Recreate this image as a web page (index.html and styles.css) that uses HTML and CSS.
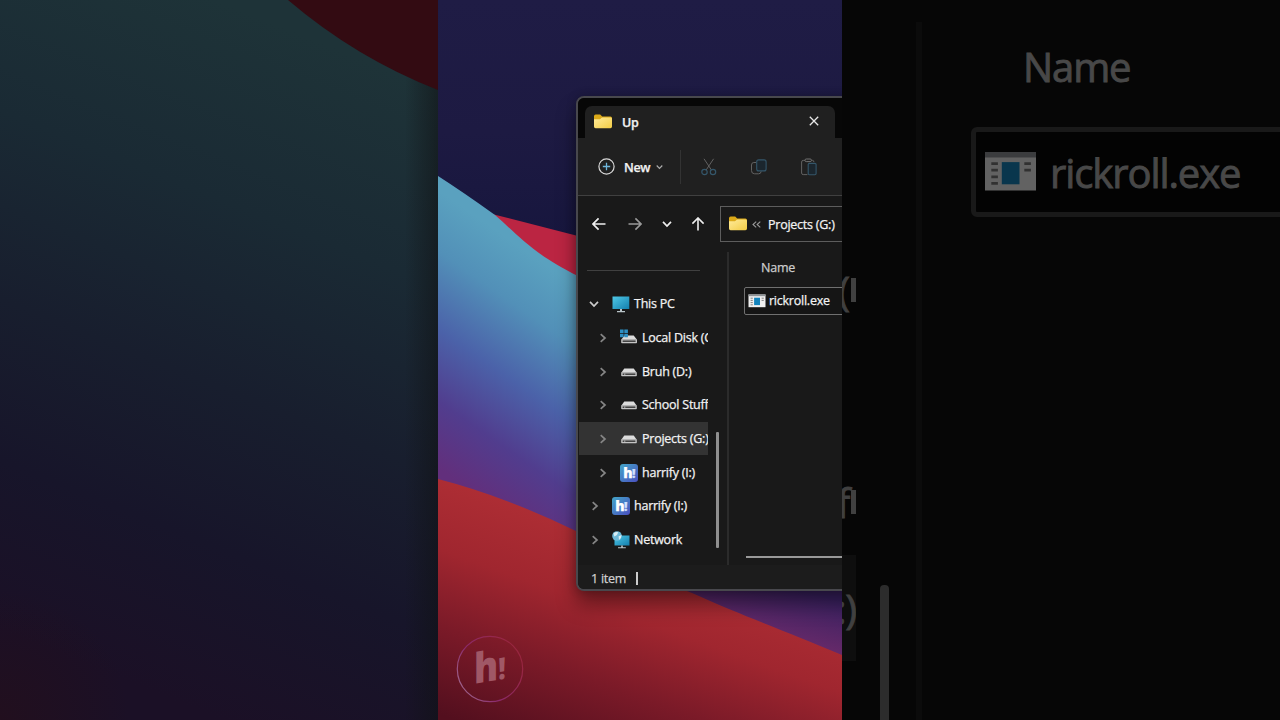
FILE: index.html
```
<!DOCTYPE html>
<html lang="en">
<head>
    <meta charset="UTF-8">
    <meta name="viewport" content="width=device-width, initial-scale=1.0">
    <title>rickroll.exe</title>
    <link rel="stylesheet" href="styles.css">
</head>
<body>
    <!-- shared icons -->
    <svg class="defs" width="0" height="0">
        <defs>
            <linearGradient id="folderFill" x1="0" y1="0" x2="1" y2="1">
                <stop offset="0" stop-color="#ffeb9a"/>
                <stop offset="1" stop-color="#f2cc45"/>
            </linearGradient>
            <linearGradient id="screenFill" x1="0" y1="0" x2="1" y2="1">
                <stop offset="0" stop-color="#4fc8e6"/>
                <stop offset="1" stop-color="#137fae"/>
            </linearGradient>
        </defs>
        <symbol id="folder" viewBox="0 0 18 15">
            <path d="M0 2.2Q0 .6 1.6 .6H6.2L8.2 2.6H16.4Q18 2.6 18 4.2V8H0Z" fill="#dba918"/>
            <path d="M0 5.2H6L8 3.4H16.6Q18 3.4 18 4.8V12.6Q18 14.2 16.4 14.2H1.6Q0 14.2 0 12.6Z" fill="url(#folderFill)"/>
        </symbol>
        <symbol id="right" viewBox="0 0 8 10">
            <path d="M1.7 1.2L6 5L1.7 8.8" fill="none" stroke="currentColor" stroke-width="1.7"/>
        </symbol>
        <symbol id="down" viewBox="0 0 10 8">
            <path d="M1 1.9L5 6L9 1.9" fill="none" stroke="currentColor" stroke-width="1.7"/>
        </symbol>
        <symbol id="drive" viewBox="0 0 18 18">
            <path d="M4.3 5.6H13.7L16.6 9.6H1.4Z" fill="#dcdcdc"/>
            <path d="M1.2 9.2H16.8V12.4Q16.8 13.2 16 13.2H2Q1.2 13.2 1.2 12.4Z" fill="#c4c4c4"/>
            <path d="M2.6 10.4H15.4V12H2.6Z" fill="#444"/>
            <path d="M4 10.8H5.4V11.6H4Z" fill="#ddd"/>
        </symbol>
        <symbol id="exe" viewBox="0 0 18 14">
            <path d="M.5 .5H17.5V13.2H.5Z" fill="#f0f0f0"/>
            <path d="M.5 .3H17.5V2.2H.5Z" fill="#8f9396"/>
            <path d="M6.1 3.7H12V11.1H6.1Z" fill="#1384bd"/>
            <path d="M2.6 4.2H4.8M2.6 6.4H4.8M2.6 8.6H4.8M2.6 10.8H4.8M13.6 4.2H15.8M13.6 6.4H15.8" stroke="#777" stroke-width=".9"/>
        </symbol>
    </svg>

    <div class="video">
        <!-- zoomed wallpaper -->
        <div class="side left">
            <svg viewBox="0 0 438 720" preserveAspectRatio="none">
                <path d="M288 0Q356 58 438 90V0Z" fill="#330b12"/>
            </svg>
        </div>

        <div class="screen">
            <svg class="wallpaper" viewBox="0 0 404 720">
                <defs>
                    <linearGradient id="sky" x1="0" y1="0" x2="0" y2="240" gradientUnits="userSpaceOnUse">
                        <stop offset="0" stop-color="#1f1c45"/>
                        <stop offset=".55" stop-color="#1d1a42"/>
                        <stop offset="1" stop-color="#17163e"/>
                    </linearGradient>
                    <linearGradient id="blue" x1="0" y1="190" x2="-130" y2="378" gradientUnits="userSpaceOnUse">
                        <stop offset="0" stop-color="#5aa1bf"/>
                        <stop offset=".22" stop-color="#5290b8"/>
                        <stop offset=".5" stop-color="#4b62a9"/>
                        <stop offset=".76" stop-color="#513d8e"/>
                        <stop offset="1" stop-color="#622f7c"/>
                    </linearGradient>
                    <linearGradient id="red" x1="140" y1="510" x2="60" y2="735" gradientUnits="userSpaceOnUse">
                        <stop offset="0" stop-color="#b02f35"/>
                        <stop offset=".35" stop-color="#a0262f"/>
                        <stop offset=".65" stop-color="#7b1a28"/>
                        <stop offset="1" stop-color="#530f1e"/>
                    </linearGradient>
                    <linearGradient id="purple" x1="360" y1="590" x2="345" y2="650" gradientUnits="userSpaceOnUse">
                        <stop offset="0" stop-color="#3a2161"/>
                        <stop offset="1" stop-color="#6e2b6b"/>
                    </linearGradient>
                </defs>
                <path d="M0 0H404V720H0Z" fill="url(#sky)"/>
                <path d="M50 213L140 236V290L60 260Z" fill="#bb2542"/>
                <path d="M0 176Q25 192 57 215C80 235 95 254 140 276V600H0Z" fill="url(#blue)"/>
                <path d="M230 570H404V670H230Z" fill="url(#purple)"/>
                <path d="M0 479Q66 496 138 531C190 556 220 580 254 593C310 618 350 632 404 655V720H0Z" fill="url(#red)"/>
            </svg>

            <div class="explorer">
                <div class="titlebar">
                    <div class="tab">
                        <svg class="folder"><use href="#folder"/></svg>
                        <span>Up</span>
                        <svg class="close" viewBox="0 0 10 10"><path d="M.8 .8L9.2 9.2M9.2 .8L.8 9.2" stroke="#e8e8e8" stroke-width="1.3"/></svg>
                    </div>
                </div>

                <div class="toolbar">
                    <div class="new-btn">
                        <svg class="plus" viewBox="0 0 17 17" fill="none">
                            <circle cx="8.5" cy="8.5" r="7.6" stroke="#d8d8d8" stroke-width="1.2"/>
                            <path d="M8.5 4.8V12.2M4.8 8.5H12.2" stroke="#6fb6dc" stroke-width="1.3"/>
                        </svg>
                        <span>New</span>
                        <svg class="caret"><use href="#down"/></svg>
                    </div>
                    <svg class="tool" viewBox="0 0 18 18" fill="none">
                        <path d="M4 .8L11.6 12.2M13.6 .8L6 12.2" stroke="#626262"/>
                        <circle cx="4.5" cy="14" r="2.7" stroke="#34566a" stroke-width="1.2"/>
                        <circle cx="13" cy="14" r="2.7" stroke="#34566a" stroke-width="1.2"/>
                    </svg>
                    <svg class="tool" viewBox="0 0 18 18" fill="none">
                        <path d="M6 4.5H3.8Q1.5 4.5 1.5 7V12.6Q1.5 15.8 4.6 15.8H8.6Q11 15.8 11.2 13.4" stroke="#626262"/>
                        <rect x="6.7" y="1.9" width="9.4" height="11" rx="2" fill="#1b262e" stroke="#34566a" stroke-width="1.1"/>
                    </svg>
                    <svg class="tool" viewBox="0 0 18 18" fill="none">
                        <path d="M5 2.4H3.2Q1.6 2.4 1.6 4V15Q1.6 16.6 3.2 16.6H7.4M11.5 2.4H12.6Q13.9 2.4 13.9 4" stroke="#626262"/>
                        <rect x="5" y="1" width="6.4" height="2.6" rx="1.2" stroke="#727272"/>
                        <rect x="8.2" y="5.4" width="7.9" height="11.3" rx="1.2" fill="#1b262e" stroke="#34566a" stroke-width="1.1"/>
                    </svg>
                </div>

                <div class="navbar">
                    <svg class="arrow" viewBox="0 0 14 14"><path d="M13.5 7H1.2M6.6 1.4L1 7L6.6 12.6" fill="none" stroke="#eee" stroke-width="1.7"/></svg>
                    <svg class="arrow dim" viewBox="0 0 14 14"><path d="M.5 7H12.8M7.4 1.4L13 7L7.4 12.6" fill="none" stroke="#999" stroke-width="1.6"/></svg>
                    <svg class="recent"><use href="#down"/></svg>
                    <svg class="arrow" viewBox="0 0 14 14"><path d="M7 13.5V1.2M1.4 6.6L7 1L12.6 6.6" fill="none" stroke="#eee" stroke-width="1.6"/></svg>
                    <div class="address">
                        <svg class="folder"><use href="#folder"/></svg>
                        <svg class="back" viewBox="0 0 9 7"><path d="M4.2 .6L1 3.5L4.2 6.4M8.3 .6L5.1 3.5L8.3 6.4" fill="none" stroke="#999" stroke-width="1.1"/></svg>
                        <span>Projects (G:)</span>
                    </div>
                </div>

                <div class="main">
                    <div class="sidebar">
                        <div class="line"></div>
                        <ul class="tree">
                            <li class="open">
                                <svg class="chev-down"><use href="#down"/></svg>
                                <svg class="icon" viewBox="0 0 18 18">
                                    <path d="M.5 1.5H17.3V14H.5Z" fill="url(#screenFill)"/>
                                    <path d="M8 14H10V16H13V17.2H5V16H8Z" fill="#b9c4c8"/>
                                </svg>
                                <span>This PC</span>
                            </li>
                            <li class="child">
                                <svg class="chev"><use href="#right"/></svg>
                                <svg class="icon" viewBox="0 0 18 18">
                                    <path d="M4.5 6.6H13.7L16.8 10.6H1.4Z" fill="#dcdcdc"/>
                                    <path d="M1.2 10.2H17V13.4Q17 14.2 16.2 14.2H2Q1.2 14.2 1.2 13.4Z" fill="#c4c4c4"/>
                                    <path d="M2.6 11.4H15.6V13H2.6Z" fill="#444"/>
                                    <path d="M0 .6H3.6V4.1H0ZM4.3 .6H7.9V4.1H4.3ZM0 4.8H3.6V8.3H0ZM4.3 4.8H7.9V8.3H4.3Z" fill="#2d8fc4"/>
                                </svg>
                                <span>Local Disk (C:)</span>
                            </li>
                            <li class="child">
                                <svg class="chev"><use href="#right"/></svg>
                                <svg class="icon"><use href="#drive"/></svg>
                                <span>Bruh (D:)</span>
                            </li>
                            <li class="child">
                                <svg class="chev"><use href="#right"/></svg>
                                <svg class="icon"><use href="#drive"/></svg>
                                <span>School Stuff</span>
                            </li>
                            <li class="child selected">
                                <svg class="chev"><use href="#right"/></svg>
                                <svg class="icon"><use href="#drive"/></svg>
                                <span>Projects (G:)</span>
                            </li>
                            <li class="child">
                                <svg class="chev"><use href="#right"/></svg>
                                <b class="logo">h<i>!</i></b>
                                <span>harrify (I:)</span>
                            </li>
                            <li>
                                <svg class="chev"><use href="#right"/></svg>
                                <b class="logo">h<i>!</i></b>
                                <span>harrify (I:)</span>
                            </li>
                            <li>
                                <svg class="chev"><use href="#right"/></svg>
                                <svg class="icon" viewBox="0 0 18 18">
                                    <path d="M2.5 4.5H17.5V14.5H2.5Z" fill="url(#screenFill)"/>
                                    <path d="M9.2 14.5H10.8V16.2H13.8V17.3H6V16.2H9.2Z" fill="#b9c4c8"/>
                                    <circle cx="5" cy="5" r="4.8" fill="#6db9d8"/>
                                    <path d="M1.5 2.4Q4 .4 6.2 1.2L5 4L2.4 5.4ZM6.6 5.2L9.6 4Q9.6 7.4 7 9Z" fill="#d9eef5"/>
                                </svg>
                                <span>Network</span>
                            </li>
                        </ul>
                    </div>
                    <div class="track"><div class="thumb"></div></div>
                    <div class="files">
                        <div class="col-name">Name</div>
                        <div class="file">
                            <svg><use href="#exe"/></svg>
                            <span>rickroll.exe</span>
                        </div>
                        <div class="hscroll"></div>
                    </div>
                </div>

                <div class="status"><span>1 item</span></div>
            </div>

            <!-- channel watermark -->
            <div class="watermark">
                <svg viewBox="0 0 68 68">
                    <defs>
                        <linearGradient id="ring" x1="0" y1="1" x2="1" y2=".4">
                            <stop offset="0" stop-color="#a57a98"/>
                            <stop offset=".45" stop-color="#8b2a6c"/>
                            <stop offset="1" stop-color="#982640"/>
                        </linearGradient>
                    </defs>
                    <circle cx="34" cy="34" r="32.7" fill="none" stroke="url(#ring)" stroke-width="1.2"/>
                </svg>
                <span class="mark">h<i>!</i></span>
            </div>
        </div>

        <!-- zoomed window -->
        <div class="side right">
            <div class="cut">
                <span>(<i></i></span>
                <span></span>
                <span>f<i></i></span>
                <span class="sel">:)</span>
            </div>
            <div class="big-thumb"></div>
            <div class="big-files">
                <div class="big-name">Name</div>
                <div class="big-file">
                    <svg><use href="#exe"/></svg>
                    <span>rickroll.exe</span>
                </div>
            </div>
        </div>
    </div>
</body>
</html>
```
FILE: styles.css
```
* {
    margin: 0;
    padding: 0;
    box-sizing: border-box;
}

body {
    background: #000;
    font-family: 'Open Sans', 'Noto Sans', sans-serif;
    overflow: hidden;
}

svg {
    display: block;
    flex-shrink: 0;
}

.defs {
    position: absolute;
}

.video {
    display: grid;
    grid-template-columns: 438px 404px 438px;
    width: 1280px;
    height: 720px;
}

.side {
    overflow: hidden;
}

.left {
    background:
        linear-gradient(90deg, transparent 405px, rgba(16, 18, 20, 0.55) 437px),
        radial-gradient(circle at 0 100%, rgba(40, 14, 22, 0.5), transparent 130px),
        linear-gradient(202deg, #1e3338 10%, #1a2a34 32%, #181e2e 53%, #17152a 71%, #1b1026 90%);
}

.left svg {
    width: 438px;
    height: 720px;
}

/* phone sized screen in the middle */
.screen {
    position: relative;
    overflow: hidden;
}

.wallpaper {
    width: 404px;
    height: 720px;
}

.explorer {
    position: absolute;
    left: 138px;
    top: 96px;
    width: 420px;
    height: 495px;
    display: flex;
    flex-direction: column;
    border: 2px solid #48484d;
    border-radius: 8px;
    background: #191919;
    color: #f2f2f2;
    font-size: 12.5px;
    letter-spacing: -0.24px;
    -webkit-text-stroke: 0.25px;
    white-space: nowrap;
    overflow: hidden;
    box-shadow: 0 14px 20px rgba(0, 0, 0, 0.38), 0 0 10px rgba(0, 0, 0, 0.25);
}

.titlebar {
    height: 40px;
    padding: 8px 0 0 7px;
    background: #070707;
}

.tab {
    display: flex;
    align-items: center;
    width: 250px;
    height: 32px;
    padding: 0 16px 2px 9px;
    border-radius: 7px 7px 0 0;
    background: #202020;
    font-weight: 600;
}

.folder {
    width: 18px;
    height: 15px;
}

.tab span {
    margin: 2px 0 0 10px;
}

.close {
    width: 10px;
    height: 10px;
    margin-left: auto;
}

.toolbar {
    display: flex;
    align-items: center;
    height: 58px;
    padding-left: 20px;
    border-bottom: 1px solid #404040;
    background: #202020;
}

.new-btn {
    display: flex;
    align-items: center;
    width: 83px;
    height: 34px;
    margin-right: 19px;
    border-right: 1px solid #333;
    font-weight: 600;
    letter-spacing: -0.4px;
}

.plus {
    width: 17px;
    height: 17px;
}

.new-btn span {
    margin: 1px 6px 0 9px;
}

.caret {
    width: 7px;
    height: 6px;
    color: #aaa;
}

.tool {
    width: 18px;
    height: 18px;
    margin-right: 32px;
}

.navbar {
    display: flex;
    align-items: center;
    height: 56px;
    padding-left: 14px;
}

.arrow {
    width: 14px;
    height: 14px;
    margin-right: 22px;
}

.arrow.dim {
    margin-right: 20px;
}

.recent {
    width: 10px;
    height: 8px;
    margin-right: 19px;
    color: #eee;
}

.address {
    display: flex;
    flex: 1;
    align-items: center;
    height: 36px;
    margin: 0 -10px 0 -7px;
    padding-left: 8px;
    border: 1px solid #5d5d5d;
}

.address .folder {
    margin-top: -1px;
}

.back {
    width: 9px;
    height: 7px;
    margin: 0 7px 0 5px;
}

.main {
    display: flex;
    flex: 1;
}

.sidebar {
    width: 130px;
    padding: 18px 0 0 1px;
    overflow: hidden;
}

.line {
    width: 113px;
    height: 1px;
    margin: 0 0 16px 8px;
    background: #404040;
}

.tree {
    list-style: none;
}

.tree li {
    display: flex;
    align-items: center;
    height: 33.65px;
    padding-left: 12px;
    overflow: hidden;
}

.tree li.open {
    padding-left: 10px;
}

.tree li.child {
    padding-left: 20px;
}

.tree li.selected {
    background: #333;
}

.chev {
    width: 8px;
    height: 10px;
    margin: 1px 13px 0 0;
    color: #858585;
}

.chev-down {
    width: 10px;
    height: 8px;
    margin-right: 13px;
    color: #ccc;
}

.icon,
.logo {
    flex-shrink: 0;
    width: 18px;
    height: 18px;
    margin: 1px 4px 0 0;
}

.logo {
    border-radius: 3px;
    background: linear-gradient(135deg, #43a6c8, #4a4fc0);
    color: #fff;
    font: 800 14px/17px 'Open Sans', sans-serif;
    letter-spacing: -0.6px;
    text-align: center;
}

.logo i {
    color: #cfe0ff;
    font-size: 12px;
    font-style: normal;
}

.track {
    width: 21px;
    padding: 180px 0 0 8px;
    border-right: 2px solid #2b2b2b;
}

.thumb {
    width: 3px;
    height: 116px;
    border-radius: 1px;
    background: #8f8f8f;
}

.files {
    display: flex;
    flex: 1;
    flex-direction: column;
    padding: 7px 0 7px 15px;
}

.col-name {
    height: 28px;
    padding-left: 17px;
    color: #ccc;
}

.file {
    display: flex;
    align-items: center;
    height: 28px;
    margin-right: -10px;
    padding: 0 0 1px 3px;
    border: 1px solid #707070;
    border-radius: 2px;
    background: #151515;
}

.file svg {
    width: 18px;
    height: 14px;
    margin-right: 3px;
}

.hscroll {
    height: 2px;
    margin: auto 0 0 2px;
    background: #999;
}

.status {
    height: 24px;
    padding: 5px 0 0 13px;
    background: #1c1c1c;
    color: #d0d0d0;
}

.status span {
    display: inline-block;
    height: 13px;
    padding-right: 10px;
    border-right: 2px solid #ccc;
    line-height: 13px;
}

.watermark {
    position: absolute;
    left: 18px;
    top: 635px;
    width: 68px;
    height: 68px;
}

.mark {
    position: absolute;
    left: 18px;
    top: 10px;
    color: #a05866;
    font: 800 42px/46px 'Open Sans', sans-serif;
    transform: skewY(-10deg) scaleX(0.86);
    transform-origin: 0 50%;
}

.mark i {
    font-size: 30px;
    font-style: normal;
}

/* dimmed enlarged copy of the window */
.right {
    display: flex;
    background: #060606;
    color: #484848;
    font-size: 40px;
    letter-spacing: -1.1px;
    -webkit-text-stroke: 0.9px;
    white-space: nowrap;
}

.cut {
    display: flex;
    flex-direction: column;
    width: 14px;
    padding-top: 237px;
}

.cut span {
    display: flex;
    flex-shrink: 0;
    justify-content: flex-end;
    align-items: center;
    height: 106px;
    overflow: hidden;
    color: #404040;
}

.cut i {
    flex-shrink: 0;
    width: 5px;
    height: 24px;
    margin-left: 2px;
    background: #404040;
}

.cut .sel {
    background: #0e0e0e;
}

.big-thumb {
    width: 9px;
    margin: 585px 27px 0 24px;
    border-radius: 4px 4px 0 0;
    background: #2c2c2c;
}

.big-files {
    flex: 1;
    margin: 22px -10px 0 0;
    padding-left: 49px;
    border-left: 6px solid #0b0b0b;
}

.big-name {
    height: 105px;
    padding: 18px 0 0 52px;
    line-height: 54px;
}

.big-file {
    display: flex;
    align-items: center;
    height: 90px;
    padding-left: 7px;
    border: 5px solid #191919;
    border-radius: 6px;
    background: #030303;
}

.big-file svg {
    width: 55px;
    height: 42px;
    margin-right: 12px;
    opacity: 0.4;
}
```
